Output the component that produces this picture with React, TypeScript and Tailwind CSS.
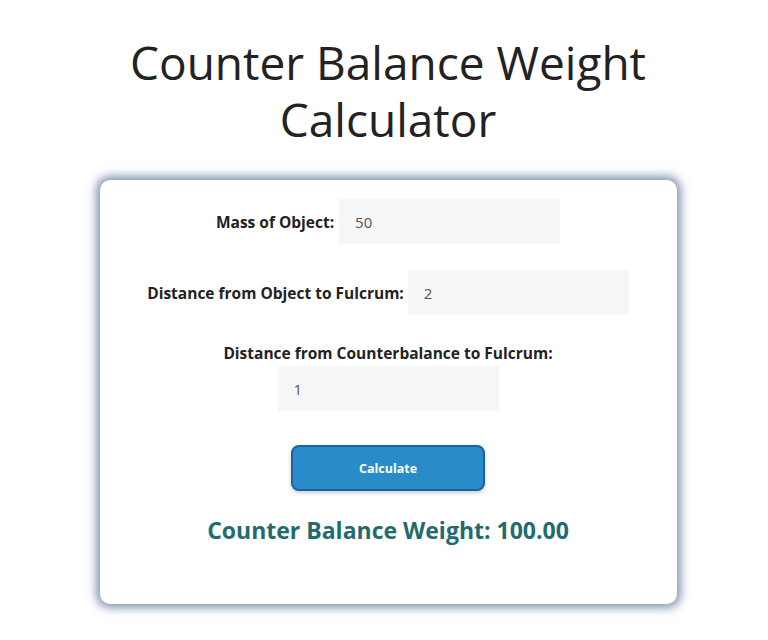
import { useState } from 'react';

export default function App() {
  const [mass, setMass] = useState('50');
  const [objDist, setObjDist] = useState('2');
  const [cbDist, setCbDist] = useState('1');
  const [result, setResult] = useState<number | null>(100);

  const calculate = () => {
    const m = parseFloat(mass);
    const d1 = parseFloat(objDist);
    const d2 = parseFloat(cbDist);
    if (isNaN(m) || isNaN(d1) || isNaN(d2) || d2 === 0) {
      setResult(null);
      return;
    }
    setResult((m * d1) / d2);
  };

  const inputCls =
    'w-[221px] h-[45px] bg-[#f5f6f7] px-4 text-[15px] text-[#555] outline-none';

  return (
    <div className="min-h-screen bg-white pl-2 font-['Open_Sans',sans-serif] text-[#222]">
      <h1 className="pt-[34px] text-center text-[46px] leading-[57px] font-normal text-[#222]">
        Counter Balance Weight
        <br />
        Calculator
      </h1>

      <div className="mx-auto mt-[32px] w-[577px] h-[424px] rounded-[10px] bg-white pt-[19px] shadow-[0_0_10px_4px_rgba(80,110,150,0.7)]">
        {/* mass */}
        <div className="flex items-center justify-center gap-[5px]">
          <label className="pt-[2px] text-[15.5px] font-bold">Mass of Object:</label>
          <input className={inputCls} value={mass} onChange={(e) => setMass(e.target.value)} />
        </div>

        {/* object distance */}
        <div className="mt-[26px] flex items-center justify-center gap-[4px]">
          <label className="pt-[2px] text-[15.5px] font-bold">Distance from Object to Fulcrum:</label>
          <input className={inputCls} value={objDist} onChange={(e) => setObjDist(e.target.value)} />
        </div>

        {/* counterbalance distance */}
        <div className="mt-[26px] flex flex-col items-center">
          <label className="text-[15.5px] font-bold leading-[25px]">
            Distance from Counterbalance to Fulcrum:
          </label>
          <input className={inputCls} value={cbDist} onChange={(e) => setCbDist(e.target.value)} />
        </div>

        <div className="mt-[34px] flex justify-center">
          <button
            onClick={calculate}
            className="w-[194px] h-[46px] rounded-[8px] border-2 border-[#1a63a0] bg-[#2a8bc9] pt-[3px] text-[12.5px] font-bold text-white shadow-[0_2px_4px_rgba(0,0,0,0.2)]"
          >
            Calculate
          </button>
        </div>

        <div className="mt-[22px] text-center text-[23px] font-bold text-[#1f6b6e]">
          Counter Balance Weight: {result === null ? '—' : result.toFixed(2)}
        </div>
      </div>
    </div>
  );
}
